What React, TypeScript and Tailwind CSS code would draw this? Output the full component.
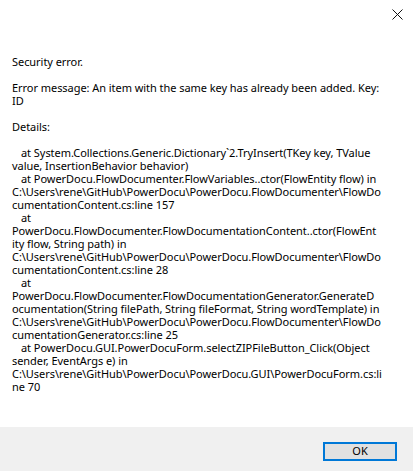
import React from "react";

const lines: { t: string; indent?: boolean }[] = [
  { t: "Security error." },
  { t: "" },
  { t: "Error message: An item with the same key has already been added. Key:" },
  { t: "ID" },
  { t: "" },
  { t: "Details:" },
  { t: "" },
  { t: "at System.Collections.Generic.Dictionary`2.TryInsert(TKey key, TValue", indent: true },
  { t: "value, InsertionBehavior behavior)" },
  { t: "at PowerDocu.FlowDocumenter.FlowVariables..ctor(FlowEntity flow) in", indent: true },
  { t: "C:\\Users\\rene\\GitHub\\PowerDocu\\PowerDocu.FlowDocumenter\\FlowDo" },
  { t: "cumentationContent.cs:line 157" },
  { t: "at", indent: true },
  { t: "PowerDocu.FlowDocumenter.FlowDocumentationContent..ctor(FlowEnt" },
  { t: "ity flow, String path) in" },
  { t: "C:\\Users\\rene\\GitHub\\PowerDocu\\PowerDocu.FlowDocumenter\\FlowDo" },
  { t: "cumentationContent.cs:line 28" },
  { t: "at", indent: true },
  { t: "PowerDocu.FlowDocumenter.FlowDocumentationGenerator.GenerateD" },
  { t: "ocumentation(String filePath, String fileFormat, String wordTemplate) in" },
  { t: "C:\\Users\\rene\\GitHub\\PowerDocu\\PowerDocu.FlowDocumenter\\FlowDo" },
  { t: "cumentationGenerator.cs:line 25" },
  { t: "at PowerDocu.GUI.PowerDocuForm.selectZIPFileButton_Click(Object", indent: true },
  { t: "sender, EventArgs e) in" },
  { t: "C:\\Users\\rene\\GitHub\\PowerDocu\\PowerDocu.GUI\\PowerDocuForm.cs:li" },
  { t: "ne 70" },
];

export default function App() {
  return (
    <div
      className="w-[413px] h-[471px] bg-white flex flex-col text-black overflow-hidden"
      style={{ fontFamily: '"Noto Sans", "Open Sans", sans-serif' }}
    >
      <div className="flex justify-end pt-[9px] pr-[10px] h-[30px]">
        <svg width="11" height="11" viewBox="0 0 11 11">
          <path d="M0.5 0.5 L10.5 10.5 M10.5 0.5 L0.5 10.5" stroke="#111" strokeWidth="1" />
        </svg>
      </div>
      <div className="flex-1 pl-[12px] pt-[25px] text-[11px] leading-[13px] tracking-[-0.05px]">
        {lines.map((l, i) => (
          <div key={i} className={`h-[13px] whitespace-nowrap ${l.indent ? "pl-[9px]" : ""}`}>
            {l.t}
          </div>
        ))}
      </div>
      <div className="h-[44px] bg-[#f0f0f0] flex items-center justify-end pr-[16px]">
        <div className="w-[74px] h-[19px] border-2 border-[#0078d7] bg-[#e1e1e1] flex items-center justify-center text-[11px] mt-[4px]">
          OK
        </div>
      </div>
    </div>
  );
}
